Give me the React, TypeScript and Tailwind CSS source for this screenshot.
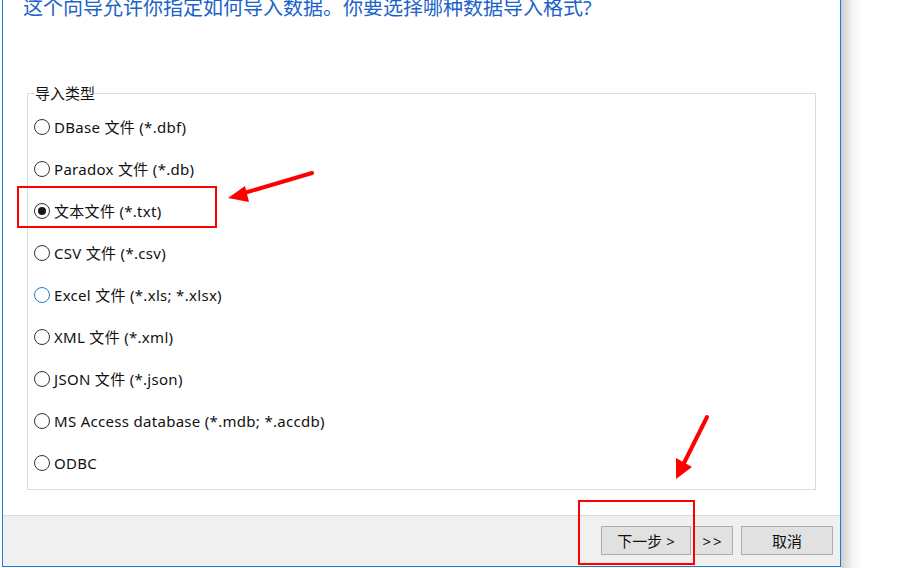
import React from "react";

const options = [
  { label: "DBase 文件 (*.dbf)" },
  { label: "Paradox 文件 (*.db)" },
  { label: "文本文件 (*.txt)", checked: true },
  { label: "CSV 文件 (*.csv)" },
  { label: "Excel 文件 (*.xls; *.xlsx)", focus: true },
  { label: "XML 文件 (*.xml)" },
  { label: "JSON 文件 (*.json)" },
  { label: "MS Access database (*.mdb; *.accdb)" },
  { label: "ODBC" },
];

function Radio({ checked, focus }: { checked?: boolean; focus?: boolean }) {
  return (
    <span
      className={`flex h-[16px] w-[16px] shrink-0 items-center justify-center rounded-full border bg-white ${
        focus ? "border-[#1e7ad8]" : "border-[#333333]"
      }`}
    >
      {checked && <span className="h-[8px] w-[8px] rounded-full bg-[#1a1a1a]" />}
    </span>
  );
}

export default function App() {
  return (
    <div className="relative flex h-[568px] w-[904px] overflow-hidden bg-white font-[Noto_Sans,Noto_Sans_CJK_SC,sans-serif] text-[15px] text-[#111]">
      <div className="w-[2px] shrink-0" />

      {/* Wizard window */}
      <div className="flex h-[567px] w-[839px] shrink-0 flex-col border-b border-l border-r border-[#1f7bd1] bg-white">
        <div className="-mt-[4px] pl-[20px] text-[20px] leading-[24px] text-[#1b63c9] whitespace-nowrap">
          这个向导允许你指定如何导入数据。你要选择哪种数据导入格式?
        </div>

        <fieldset className="ml-[24px] mt-[63px] h-[407px] w-[789px] border border-[#dcdcdc]">
          <legend className="ml-[7px] bg-white text-[15px] leading-[20px]">导入类型</legend>
          <div className="pt-[3px]">
            {options.map((o) => (
              <div key={o.label} className="flex h-[42px] items-center gap-[4px] pl-[6px]">
                <Radio checked={o.checked} focus={o.focus} />
                <span className="leading-[20px] tracking-[0.3px]">{o.label}</span>
              </div>
            ))}
          </div>
        </fieldset>

        <div className="flex-1" />

        {/* Footer */}
        <div className="flex h-[51px] items-start justify-end border-t border-[#dadada] bg-[#f0f0f0] pr-[7px] pt-[10px]">
          <button className="h-[29px] w-[90px] border border-[#adadad] bg-[#e1e1e1] text-[15px] leading-[20px]">
            下一步 &gt;
          </button>
          <button className="ml-[2px] h-[29px] w-[40px] border border-[#adadad] bg-[#e1e1e1] text-[15px] leading-[20px] tracking-[2px]">
            &gt;&gt;
          </button>
          <button className="ml-[8px] h-[29px] w-[92px] border border-[#adadad] bg-[#e1e1e1] text-[15px] leading-[20px]">
            取消
          </button>
        </div>
      </div>

      {/* Window shadow */}
      <div className="h-full w-[22px] shrink-0 bg-gradient-to-r from-[#cfcfcf] via-[#f2f2f2] to-white" />

      {/* Red annotations */}
      <div className="absolute left-[17px] top-[186px] h-[42px] w-[200px] border-2 border-[#ff0000]" />
      <div className="absolute left-[578px] top-[500px] h-[65px] w-[117px] border-2 border-[#ff0000]" />
      <svg className="pointer-events-none absolute left-0 top-0" width="904" height="568">
        <line x1="312" y1="173" x2="244" y2="193" stroke="#ff0000" strokeWidth="4" strokeLinecap="round" />
        <polygon points="228,198 245,186 249,202" fill="#ff0000" />
        <line x1="707" y1="417" x2="684" y2="463" stroke="#ff0000" strokeWidth="4" strokeLinecap="round" />
        <polygon points="676,479 676,458 692,467" fill="#ff0000" />
      </svg>
    </div>
  );
}
